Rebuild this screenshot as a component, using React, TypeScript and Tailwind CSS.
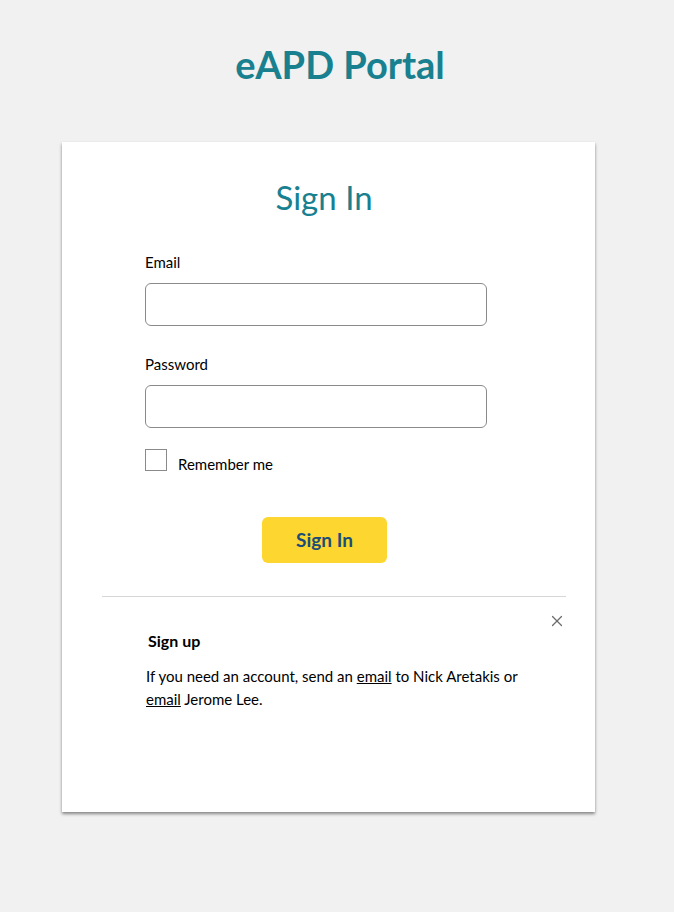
import { X } from "lucide-react";

export default function App() {
  return (
    <div
      className="min-h-[912px] bg-[#f1f1f1] pt-[39px] pb-[100px]"
      style={{ fontFamily: "Lato, 'Open Sans', sans-serif" }}
    >
      <h1 className="pl-[6px] text-center text-[38px] font-bold leading-[50px] text-[#18808f]">
        eAPD Portal
      </h1>

      <div className="ml-[62px] mt-[53px] h-[670px] w-[533px] bg-white pt-[33px] shadow-[0_2px_3px_rgba(0,0,0,0.45)]">
        <h2 className="pr-[9px] text-center text-[33px] leading-[44px] text-[#18808f]">Sign In</h2>

        <form className="ml-[83px] mt-[33px] w-[342px]">
          <label className="block text-[15px] leading-[20px] text-black">Email</label>
          <input
            type="email"
            className="mt-[11px] block h-[43px] w-full rounded-[6px] border border-[#8a8a8a] bg-white px-3"
          />

          <label className="mt-[28px] block text-[15px] leading-[20px] text-black">Password</label>
          <input
            type="password"
            className="mt-[11px] block h-[43px] w-full rounded-[6px] border border-[#8a8a8a] bg-white px-3"
          />

          <label className="mt-[21px] flex items-start gap-[11px] text-[15px] text-black">
            <span className="block h-[22px] w-[22px] shrink-0 border border-[#8a8a8a] bg-white" />
            <span className="mt-[5px] leading-[20px]">Remember me</span>
          </label>

          <button
            type="button"
            className="ml-[117px] mt-[43px] block h-[46px] w-[125px] rounded-[6px] bg-[#fdd62f] text-[19px] font-bold text-[#1b4d79]"
          >
            Sign In
          </button>
        </form>

        <div className="ml-[40px] mr-[29px] mt-[33px] border-t border-[#d6d6d6]" />

        <div className="relative pl-[84px] pr-[30px] pt-[33px]">
          <button type="button" className="absolute left-[486px] top-[15px] text-[#6b6b6b]">
            <X size={18} strokeWidth={1.6} />
          </button>
          <h3 className="ml-[2px] text-[16px] font-bold leading-[22px] text-black">Sign up</h3>
          <p className="mt-[13px] text-[15px] leading-[23px] text-black">
            If you need an account, send an <a className="underline" href="#">email</a> to Nick
            Aretakis or
            <br />
            <a className="underline" href="#">email</a> Jerome Lee.
          </p>
        </div>
      </div>
    </div>
  );
}
